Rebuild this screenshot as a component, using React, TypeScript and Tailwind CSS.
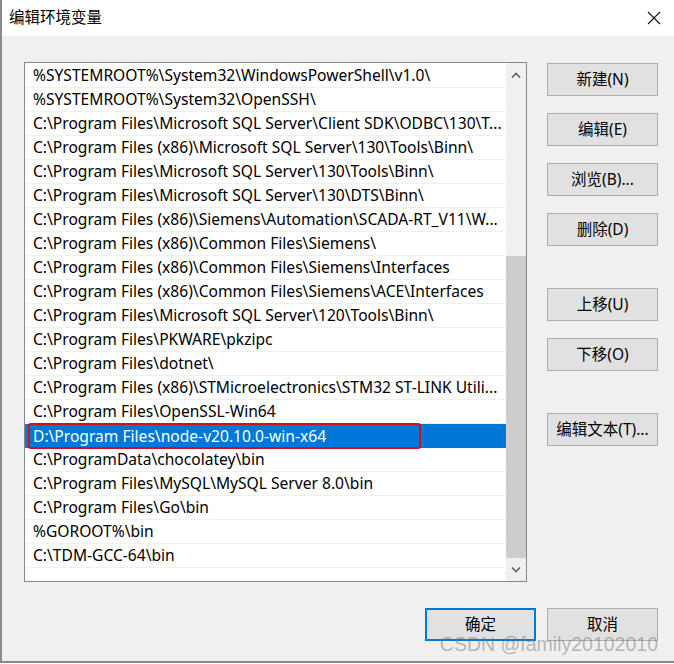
import React from "react";

const rows = [
  "%SYSTEMROOT%\\System32\\WindowsPowerShell\\v1.0\\",
  "%SYSTEMROOT%\\System32\\OpenSSH\\",
  "C:\\Program Files\\Microsoft SQL Server\\Client SDK\\ODBC\\130\\T...",
  "C:\\Program Files (x86)\\Microsoft SQL Server\\130\\Tools\\Binn\\",
  "C:\\Program Files\\Microsoft SQL Server\\130\\Tools\\Binn\\",
  "C:\\Program Files\\Microsoft SQL Server\\130\\DTS\\Binn\\",
  "C:\\Program Files (x86)\\Siemens\\Automation\\SCADA-RT_V11\\W...",
  "C:\\Program Files (x86)\\Common Files\\Siemens\\",
  "C:\\Program Files (x86)\\Common Files\\Siemens\\Interfaces",
  "C:\\Program Files (x86)\\Common Files\\Siemens\\ACE\\Interfaces",
  "C:\\Program Files\\Microsoft SQL Server\\120\\Tools\\Binn\\",
  "C:\\Program Files\\PKWARE\\pkzipc",
  "C:\\Program Files\\dotnet\\",
  "C:\\Program Files (x86)\\STMicroelectronics\\STM32 ST-LINK Utili...",
  "C:\\Program Files\\OpenSSL-Win64",
  "D:\\Program Files\\node-v20.10.0-win-x64",
  "C:\\ProgramData\\chocolatey\\bin",
  "C:\\Program Files\\MySQL\\MySQL Server 8.0\\bin",
  "C:\\Program Files\\Go\\bin",
  "%GOROOT%\\bin",
  "C:\\TDM-GCC-64\\bin",
];

const font = {
  fontFamily: '"Noto Sans", "Noto Sans CJK SC", sans-serif',
};

function Btn({ label, primary }: { label: string; primary?: boolean }) {
  return (
    <div
      className={
        primary
          ? "w-[111px] h-[33px] bg-[#e1e1e1] border-2 border-[#0078d7] flex items-center justify-center text-[15.5px] text-black"
          : "w-[111px] h-[33px] bg-[#e1e1e1] border border-[#adadad] flex items-center justify-center text-[15.5px] text-black"
      }
    >
      {label}
    </div>
  );
}

export default function App() {
  return (
    <div
      className="relative w-[674px] h-[663px] bg-[#f0f0f0] border-l-2 border-b-2 border-[#8a8a8a] flex flex-col overflow-hidden"
      style={font}
    >
      <div className="h-[36px] bg-white flex items-center justify-between pl-[7px] pr-[13px] shrink-0">
        <span className="text-[15.5px] text-black">编辑环境变量</span>
        <svg width="14" height="14" viewBox="0 0 14 14">
          <path d="M1 1 L13 13 M13 1 L1 13" stroke="#111" strokeWidth="1.1" fill="none" />
        </svg>
      </div>

      <div className="flex pl-[22px] pt-[26px] gap-[20px]">
        <div className="relative w-[503px] h-[520px] bg-white border border-[#828790] flex">
          <div className="w-[481px] flex flex-col pt-[1px]">
            {rows.map((r, i) => {
              const sel = i === 15;
              return (
                <div
                  key={i}
                  className={
                    sel
                      ? "h-[24px] shrink-0 bg-[#0078d7] text-white flex items-center pl-[8px] pt-[1px] text-[15.6px] whitespace-nowrap"
                      : "h-[24px] shrink-0 border-b border-[#f0f0f0] text-black flex items-center pl-[8px] pt-[1px] text-[15.6px] whitespace-nowrap"
                  }
                >
                  {r}
                </div>
              );
            })}
          </div>
          <div className="w-[20px] bg-[#f0f0f0] flex flex-col">
            <div className="h-[23px] flex items-center justify-center">
              <svg width="10" height="6" viewBox="0 0 10 6">
                <path d="M1 5.5 L5 1.5 L9 5.5" stroke="#606060" strokeWidth="1.6" fill="none" />
              </svg>
            </div>
            <div className="h-[170px]" />
            <div className="flex-1 bg-[#cdcdcd]" />
            <div className="h-[23px] flex items-center justify-center">
              <svg width="10" height="6" viewBox="0 0 10 6">
                <path d="M1 0.5 L5 4.5 L9 0.5" stroke="#606060" strokeWidth="1.6" fill="none" />
              </svg>
            </div>
          </div>
          <div className="absolute left-[3px] top-[360px] w-[393px] h-[26px] border-2 border-[#d0101a] rounded-[3px]" />
        </div>

        <div className="flex flex-col pt-[1px]">
          <Btn label="新建(N)" />
          <div className="h-[17px]" />
          <Btn label="编辑(E)" />
          <div className="h-[17px]" />
          <Btn label="浏览(B)..." />
          <div className="h-[17px]" />
          <Btn label="删除(D)" />
          <div className="h-[42px]" />
          <Btn label="上移(U)" />
          <div className="h-[17px]" />
          <Btn label="下移(O)" />
          <div className="h-[42px]" />
          <Btn label="编辑文本(T)..." />
        </div>
      </div>

      <div className="flex justify-end gap-[11px] pr-[16px] pt-[26px]">
        <Btn label="确定" primary />
        <Btn label="取消" />
      </div>

      <div
        className="absolute right-[16px] bottom-[7px] text-[19.5px] text-[rgba(120,120,120,0.5)] leading-none"
        style={{ fontFamily: '"Liberation Sans", Arial, sans-serif' }}
      >
        CSDN @family20102010
      </div>
    </div>
  );
}
